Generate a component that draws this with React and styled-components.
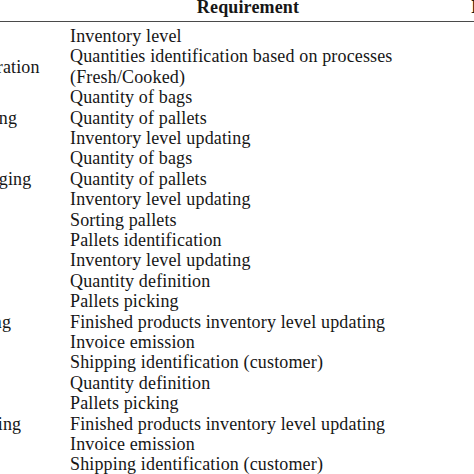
import React from "react";
import styled, { createGlobalStyle } from "styled-components";

const Global = createGlobalStyle`
  html, body { margin: 0; padding: 0; background: #fff; }
  body { font-family: "Liberation Serif", "Times New Roman", serif; }
`;

const Viewport = styled.div`
  width: 474px;
  height: 474px;
  overflow: hidden;
  background: #fff;
`;

const Table = styled.table`
  border-collapse: collapse;
  table-layout: fixed;
  width: 631px;
  margin-left: -45px;
  margin-top: -3px;
  font-size: 18px;
  line-height: 20.4px;
  letter-spacing: 0.15px;
  color: #161616;
  white-space: nowrap;
`;

const Col = styled.col`
  width: ${(p) => p.$w}px;
`;

const HeadCell = styled.th`
  font-weight: bold;
  padding: 0 0 4px ${(p) => p.$pad || 0}px;
  text-align: ${(p) => p.$align || "left"};
  border-bottom: 1.5px solid #4a4a4a;
  overflow: hidden;
`;

const StageCell = styled.td`
  padding: ${(p) => (p.$first ? "3.7px" : "0")} 0 0 0;
  vertical-align: middle;
  text-align: left;
  overflow: hidden;
`;

const ReqCell = styled.td`
  padding: ${(p) => (p.$first ? "3.7px" : "0")} 0 0 0;
  vertical-align: top;
`;

const Line = styled.div`
  height: 20.4px;
`;

const EmptyCell = styled.td`
  padding: 0;
`;

const rows = [
  {
    stage: ["Fish", "Preparation"],
    reqs: [
      "Inventory level",
      "Quantities identification based on processes",
      "(Fresh/Cooked)",
    ],
  },
  {
    stage: ["Bagging"],
    reqs: ["Quantity of bags", "Quantity of pallets", "Inventory level updating"],
  },
  {
    stage: ["Packaging"],
    reqs: ["Quantity of bags", "Quantity of pallets", "Inventory level updating"],
  },
  {
    stage: ["Stock"],
    reqs: ["Sorting pallets", "Pallets identification", "Inventory level updating"],
  },
  {
    stage: ["Picking"],
    reqs: [
      "Quantity definition",
      "Pallets picking",
      "Finished products inventory level updating",
      "Invoice emission",
      "Shipping identification (customer)",
    ],
  },
  {
    stage: ["Shipping"],
    reqs: [
      "Quantity definition",
      "Pallets picking",
      "Finished products inventory level updating",
      "Invoice emission",
      "Shipping identification (customer)",
    ],
  },
];

export default function App() {
  return (
    <Viewport>
      <Global />
      <Table>
        <colgroup>
          <Col $w={115} />
          <Col $w={356} />
          <Col $w={160} />
        </colgroup>
        <thead>
          <tr>
            <HeadCell>Stage</HeadCell>
            <HeadCell $align="center">Requirement</HeadCell>
            <HeadCell $pad={45}>Information</HeadCell>
          </tr>
        </thead>
        <tbody>
          {rows.map((r, i) => (
            <tr key={i}>
              <StageCell $first={i === 0}>
                {r.stage.map((s, j) => (
                  <Line key={j}>{s}</Line>
                ))}
              </StageCell>
              <ReqCell $first={i === 0}>
                {r.reqs.map((t, j) => (
                  <Line key={j}>{t}</Line>
                ))}
              </ReqCell>
              <EmptyCell />
            </tr>
          ))}
        </tbody>
      </Table>
    </Viewport>
  );
}
